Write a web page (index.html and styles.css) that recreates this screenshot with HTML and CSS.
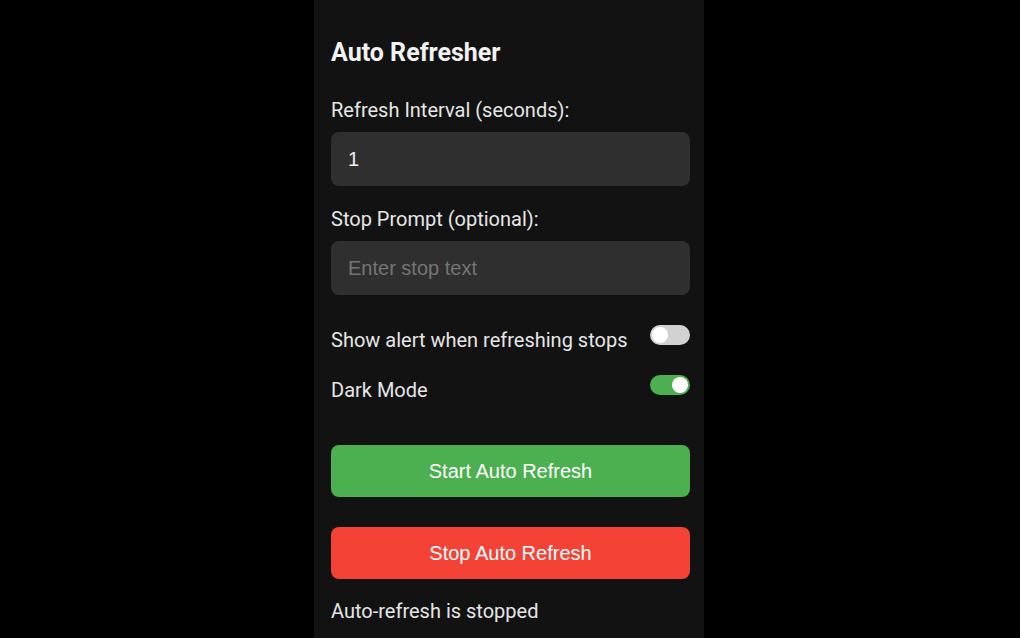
FILE: index.html
```html
<!DOCTYPE html>
<html lang="en">
<head>
<meta charset="utf-8">
<title>Auto Refresher</title>
<link rel="stylesheet" href="styles.css">
</head>
<body>
  <main class="panel">
    <h1 class="title">Auto Refresher</h1>

    <label class="field-label" for="interval">Refresh Interval (seconds):</label>
    <input class="text-input" id="interval" type="number" value="1">

    <label class="field-label field-label--second" for="stop-prompt">Stop Prompt (optional):</label>
    <input class="text-input" id="stop-prompt" type="text" placeholder="Enter stop text">

    <div class="switch-row switch-row--first">
      <span class="switch-label">Show alert when refreshing stops</span>
      <span class="switch"><span class="knob"></span></span>
    </div>
    <div class="switch-row switch-row--second">
      <span class="switch-label">Dark Mode</span>
      <span class="switch switch--on"><span class="knob"></span></span>
    </div>

    <button class="action action--start" type="button">Start Auto Refresh</button>
    <button class="action action--stop" type="button">Stop Auto Refresh</button>

    <p class="status">Auto-refresh is stopped</p>
  </main>
</body>
</html>
```

FILE: styles.css
```css
html, body {
  margin: 0;
  height: 100%;
  background: #000;
}

.panel {
  box-sizing: border-box;
  width: 390px;
  min-height: 100%;
  margin: 0 0 0 calc(50% - 196px);
  padding: 39px 14px 0 17px;
  background: #121212;
  color: #e6e6e6;
  font-family: Roboto, "Noto Sans", sans-serif;
  display: flex;
  flex-direction: column;
}

.title {
  margin: 0 0 31px;
  font-size: 25px;
  line-height: 28px;
  font-weight: 700;
  color: #f2f2f2;
}

.field-label {
  display: block;
  font-size: 20px;
  line-height: 24px;
  margin-bottom: 10px;
}

.field-label--second {
  margin-top: 21px;
}

.text-input {
  box-sizing: border-box;
  width: 100%;
  height: 54px;
  margin: 0;
  padding: 0 17px;
  border: none;
  border-radius: 8px;
  background: #2f2f2f;
  color: #f0f0f0;
  font-family: "Liberation Sans", Arial, sans-serif;
  font-size: 20px;
  outline: none;
  -moz-appearance: textfield;
}

.text-input::-webkit-outer-spin-button,
.text-input::-webkit-inner-spin-button {
  -webkit-appearance: none;
  margin: 0;
}

.text-input::placeholder {
  color: #757575;
}

.switch-row {
  display: flex;
  align-items: flex-start;
  justify-content: space-between;
}

.switch-row--first {
  margin-top: 30px;
}

.switch-row--second {
  margin-top: 23px;
}

.switch-label {
  margin-top: 3px;
  font-size: 20px;
  line-height: 24px;
}

.switch {
  position: relative;
  flex: none;
  width: 40px;
  height: 20px;
  border-radius: 10px;
  background: #d2d2d2;
}

.switch--on {
  background: #4caf50;
}

.knob {
  position: absolute;
  top: 2px;
  left: 2px;
  width: 16px;
  height: 16px;
  border-radius: 50%;
  background: #fff;
}

.switch--on .knob {
  left: 22px;
}

.action {
  width: 100%;
  height: 52px;
  margin: 0;
  border: none;
  border-radius: 8px;
  color: #fff;
  font-family: "Liberation Sans", Arial, sans-serif;
  font-size: 20px;
  cursor: pointer;
}

.action--start {
  margin-top: 43px;
  background: #4caf50;
}

.action--stop {
  margin-top: 30px;
  background: #f44336;
}

.status {
  margin: 20px 0 0;
  font-size: 20px;
  line-height: 24px;
}
```
